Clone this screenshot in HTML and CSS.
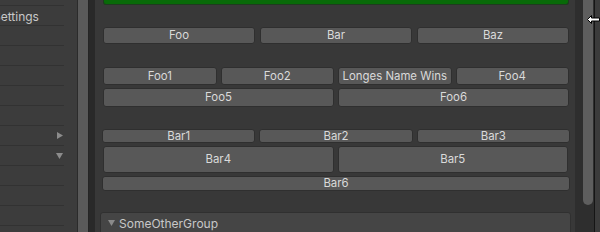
FILE: index.html
```html
<!DOCTYPE html>
<html lang="en">
<head>
  <meta charset="UTF-8">
  <title>Inspector</title>
  <link rel="stylesheet" href="styles.css">
</head>
<body>
  <div class="window">
    <aside class="sidebar">
      <div class="side-row side-top"></div>
      <div class="side-row side-first"><span class="side-label">Settings</span></div>
      <div class="side-row"></div>
      <div class="side-row"></div>
      <div class="side-row"></div>
      <div class="side-row"></div>
      <div class="side-row"></div>
      <div class="side-row">
        <svg class="side-arrow" width="6" height="7" viewBox="0 0 6 7"><path d="M0 0 L6 3.5 L0 7 Z" fill="#8c8c8c"/></svg>
      </div>
      <div class="side-row">
        <svg class="side-arrow" width="7" height="6" viewBox="0 0 7 6"><path d="M0 0 L7 0 L3.5 6 Z" fill="#8c8c8c"/></svg>
      </div>
      <div class="side-row"></div>
      <div class="side-row"></div>
      <div class="side-row"></div>
      <div class="side-row"></div>
    </aside>
    <div class="splitter"></div>
    <div class="gutter"></div>

    <main class="inspector">
      <div class="green-bar"></div>

      <div class="btn-row row-first">
        <button class="btn">Foo</button>
        <button class="btn">Bar</button>
        <button class="btn">Baz</button>
      </div>

      <div class="btn-group group-foo">
        <div class="btn-row row-18">
          <button class="btn">Foo1</button>
          <button class="btn">Foo2</button>
          <button class="btn">Longes Name Wins</button>
          <button class="btn">Foo4</button>
        </div>
        <div class="btn-row row-19">
          <button class="btn">Foo5</button>
          <button class="btn">Foo6</button>
        </div>
      </div>

      <div class="btn-group group-bar">
        <div class="btn-row row-14">
          <button class="btn">Bar1</button>
          <button class="btn">Bar2</button>
          <button class="btn">Bar3</button>
        </div>
        <div class="btn-row row-27">
          <button class="btn">Bar4</button>
          <button class="btn">Bar5</button>
        </div>
        <div class="btn-row row-15">
          <button class="btn">Bar6</button>
        </div>
      </div>

      <div class="foldout">
        <svg class="foldout-arrow" width="7" height="6" viewBox="0 0 7 6"><path d="M0 0 L7 0 L3.5 6 Z" fill="#8a8a8a"/></svg>
        <span>SomeOtherGroup</span>
      </div>
    </main>

    <div class="scroll">
      <div class="thumb"></div>
    </div>
    <div class="edge"></div>

    <!-- resize cursor -->
    <svg class="cursor" width="13" height="9" viewBox="0 0 13 9">
      <path d="M0.5 4.5 L4.5 0.5 L4.5 3 L12.5 3 L12.5 6 L4.5 6 L4.5 8.5 Z" fill="#fff" stroke="#000" stroke-width="1"/>
    </svg>
  </div>
</body>
</html>
```

FILE: styles.css
```css
* {
  box-sizing: border-box;
}

body {
  margin: 0;
  background-color: #383838;
  font-family: Inter, "Noto Sans", sans-serif;
  font-size: 12px;
  color: #d2d2d2;
}

.window {
  position: relative;
  display: flex;
  width: 600px;
  height: 232px;
  overflow: hidden;
}

/* left list */
.sidebar {
  width: 78px;
  flex-shrink: 0;
  background-color: #3c3c3c;
  border-right: 1px solid #2b2b2b;
}

.side-row {
  position: relative;
  height: 20px;
  margin-right: 13px;
  border-bottom: 1px solid #323232;
  display: flex;
  align-items: center;
}

.side-top {
  height: 6px;
}

.side-first {
  padding-top: 2px;
}

.side-label {
  margin-left: -7px;
  font-size: 12px;
  color: #c8c8c8;
  white-space: nowrap;
}

.side-arrow {
  margin-left: auto;
  margin-right: 1px;
}

.splitter {
  width: 10px;
  flex-shrink: 0;
  background-color: #5a5a5a;
}

.gutter {
  width: 7px;
  flex-shrink: 0;
  background-color: #292929;
  border-left: 1px solid #252525;
}

/* inspector */
.inspector {
  flex: 1;
  padding: 0 6px 0 8px;
  background-color: #383838;
  display: flex;
  flex-direction: column;
}

.green-bar {
  height: 5px;
  flex-shrink: 0;
  background-color: #086a08;
  border: 1px solid #1f3a1f;
  border-top: none;
  border-radius: 0 0 3px 3px;
}

.btn-row {
  display: flex;
  gap: 4px;
  flex-shrink: 0;
}

.row-first {
  height: 17px;
  margin-top: 22px;
  gap: 5px;
}

.group-foo {
  margin-top: 23px;
  display: flex;
  flex-direction: column;
  gap: 3px;
}

.group-bar {
  margin-top: 22px;
  display: flex;
  flex-direction: column;
  gap: 3px;
  margin-left: -1px;
}

.row-18 { height: 18px; }
.row-19 { height: 19px; }
.row-14 { height: 14px; gap: 4px; }
.row-27 { height: 27px; margin-left: 1px; margin-right: 1px; }
.row-15 { height: 15px; }

.group-bar .row-14,
.group-bar .row-15 {
  margin-right: -1px;
}

.btn {
  flex: 1;
  min-width: 0;
  padding: 1px 0 0;
  font-family: Inter, "Noto Sans", sans-serif;
  font-size: 11.4px;
  line-height: 1;
  color: #dadada;
  background-color: #585858;
  border: 1px solid #2f2f2f;
  border-radius: 3px;
  white-space: nowrap;
}

.foldout {
  margin-top: 21px;
  margin-left: -3px;
  margin-right: -2px;
  height: 24px;
  flex-shrink: 0;
  display: flex;
  align-items: flex-start;
  padding: 3px 0 0 7px;
  gap: 4px;
  background-color: #454545;
  border: 1px solid #303030;
  border-radius: 3px 3px 0 0;
  color: #c8c8c8;
  font-size: 12px;
}

.foldout-arrow {
  margin-top: 4px;
}

/* scroll bar */
.scroll {
  width: 19px;
  flex-shrink: 0;
  background-color: #2e2e2e;
  padding-left: 8px;
  padding-right: 1px;
}

.thumb {
  height: 205px;
  background-color: #5e5e5e;
  border-radius: 0 0 5px 5px;
}

.edge {
  width: 6px;
  flex-shrink: 0;
  background-color: #3b3b3b;
  border-left: 1px solid #151515;
}

.cursor {
  position: absolute;
  left: 587px;
  top: 15px;
}
```
